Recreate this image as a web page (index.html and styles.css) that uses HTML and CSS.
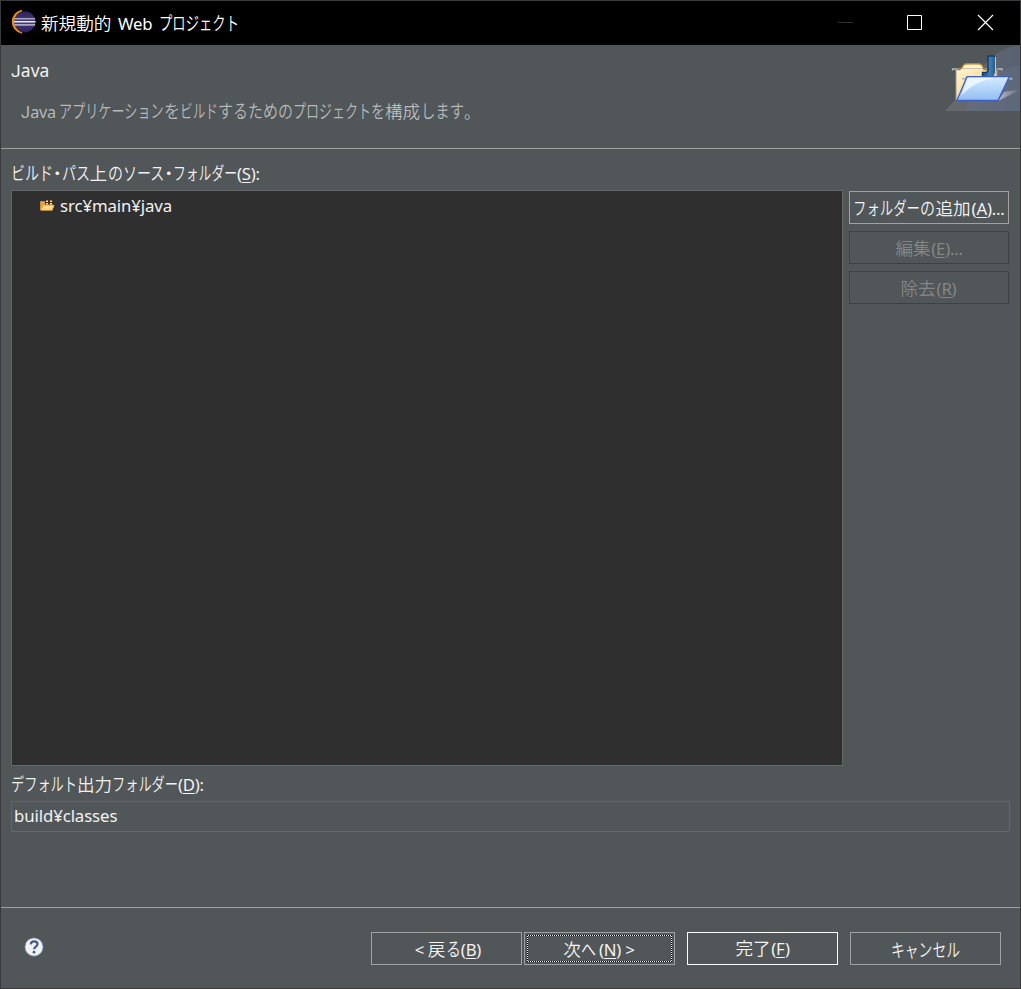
FILE: index.html
```html
<!DOCTYPE html>
<html lang="ja">
<head>
<meta charset="utf-8">
<title>新規動的 Web プロジェクト</title>
<link rel="stylesheet" href="styles.css">
</head>
<body>
<div class="window">
  <header class="titlebar">
    <svg class="app-icon" width="25" height="24" viewBox="0 0 25 24">
      <defs><linearGradient id="orb" x1="0" y1="0" x2="0" y2="1"><stop offset="0" stop-color="#2c2158"/><stop offset=".5" stop-color="#443c7b"/><stop offset="1" stop-color="#2b205c"/></linearGradient><clipPath id="orbclip"><circle cx="13.8" cy="11.8" r="10.8"/></clipPath></defs>
      <path d="M11 .5A11.4 11.4 0 0 0 11 23 12 12 0 0 1 11 .5Z" fill="#f39a22" stroke="#e78a18" stroke-width="1.4"/>
      <circle cx="13.8" cy="11.8" r="10.6" fill="url(#orb)"/>
      <g clip-path="url(#orbclip)"><path d="M2 8.8h23" stroke="#aaa6bf" stroke-width="1.4"/><path d="M2 11.8h23" stroke="#e9e8ee" stroke-width="1.6"/><path d="M2 14.9h23" stroke="#aaa6bf" stroke-width="1.6"/></g>
    </svg>
    <div class="text title"><span class="r kanji" style="--w:77">新規動的</span><span class="r" style="--w:41">Web</span><span class="k" style="--w:80;--n:6">プロジェクト</span></div>
    <svg class="caption" width="160" height="18" viewBox="0 0 160 18" fill="none">
      <path d="M1 8.5h15" stroke="#333"/><path d="M70.5 1.5h14v14h-14z" stroke="#fff"/><path d="M141 1l15 15M156 1l-15 15" stroke="#fff" stroke-width="1.2"/>
    </svg>
  </header>
  <section class="banner">
    <div class="banner-copy">
      <h1 class="text heading"><span class="r" style="--w:40"><span class="cap">J</span>ava</span></h1>
      <p class="text desc"><span class="r" style="--w:38"><span class="cap">J</span>ava</span><span class="k" style="--w:105;--n:8">アプリケーション</span><span class="k" style="--w:16;--n:1">を</span><span class="k" style="--w:38;--n:3">ビルド</span><span class="k" style="--w:75;--n:5">するための</span><span class="k" style="--w:78;--n:6">プロジェクト</span><span class="k" style="--w:14;--n:1">を</span><span class="r kanji" style="--w:36">構成</span><span class="k" style="--w:43;--n:3">します</span><span class="r" style="--w:18">。</span></p>
    </div>
    <svg class="folder-art" width="75" height="66" viewBox="0 0 75 66">
      <defs>
        <linearGradient id="haze"><stop offset="0" stop-color="#747678"/><stop offset=".5" stop-color="#6b6f7b"/><stop offset="1" stop-color="#596780"/></linearGradient>
        <linearGradient id="back" x1="0" y1="0" x2="1" y2="1"><stop offset="0" stop-color="#fff4cf"/><stop offset="1" stop-color="#efc96e"/></linearGradient>
        <linearGradient id="front" x1="0" y1="0" x2="0" y2="1"><stop offset="0" stop-color="#d3edff"/><stop offset="1" stop-color="#92bdf3"/></linearGradient>
        <linearGradient id="jay"><stop offset="0" stop-color="#1d4976"/><stop offset=".6" stop-color="#477fab"/><stop offset="1" stop-color="#235b8c"/></linearGradient>
        <linearGradient id="shade"><stop offset="0" stop-color="#bbb8c8"/><stop offset="1" stop-color="#bbb8c8" stop-opacity="0"/></linearGradient>
      </defs>
      <path d="M0 66L23 41 39 20Q54 3 75 0V66Z" fill="url(#haze)" opacity=".65"/>
      <path d="M20 66Q35 27 75 20V66Z" fill="#667187" opacity=".45"/>
      <path d="M53 56L75 45Q68 45 59 47Z" fill="url(#shade)"/>
      <path d="M7.500 25.500V24H12M57 25.500V24H52" stroke="#b8b8bb" stroke-width="1.4" fill="none"/>
      <path d="M11 23.5H52V55H11Z" fill="url(#back)" stroke="#9b91a5"/>
      <path d="M15 23.5L17 22 19 19Q20 18.5 22 18.5H34Q36 18.5 37 20L39 23.5Z" fill="#fff1c3"/>
      <path d="M12 24.500H15Q17 23 19 19.500 20 18.800 22 18.800H34Q36 18.800 37 20L39 24.500H52.500V31" fill="none" stroke="#a87d22" stroke-width="1.3"/>
      <path d="M43 10.5H50V27Q50 34 42 34H37V27H41Q43 27 43 24Z" fill="url(#jay)"/>
      <path d="M37.500 32V27.500H41Q43 27.500 43 24V11H50" stroke="#0c3d72" stroke-width="1.4" fill="none"/><path d="M50.500 12V28Q50 30 48 32" stroke="#b9c8ce" fill="none"/>
      <path d="M18 35V33.500H22M66.500 35V33.500H63" stroke="#b5b3ba" stroke-width="1.4" fill="none"/>
      <path d="M22 31.7H64.200L53 55.500H11.800Z" fill="url(#front)" stroke="#405fc5" stroke-width="1.3"/>
      <path d="M23 33H49Q28 37 16 51Z" fill="#f5fcff" opacity=".75"/>
    </svg>
  </section>
  <main class="content">
    <div class="text label"><span class="k" style="--w:42;--n:3">ビルド</span><span class="dot">・</span><span class="k" style="--w:28;--n:2">パス</span><span class="r kanji" style="--w:18">上</span><span class="k" style="--w:15;--n:1">の</span><span class="k" style="--w:42;--n:3">ソース</span><span class="dot">・</span><span class="k" style="--w:64;--n:5">フォルダー</span><span class="m">(<u>S</u>):</span></div>
    <div class="sources">
      <div class="tree">
        <div class="tree-row">
          <svg width="16" height="14" viewBox="0 0 16 14"><path d="M1.500 12V3.500h4l1 1h7v7.500z" fill="#e5a444" stroke="#d28a35"/><path d="M6 1.500h8v5H6z" fill="#4b2e1c"/><path d="M7 2.500h2v1.500H7zM11 2.500h2v1.500h-2zM7 5h2v1.500H7zM11 5h2v1.500h-2z" fill="#ffdca0"/><path d="M4.500 7.500h10.500L13 12H2z" fill="#ffdd86" stroke="#f3b458"/></svg>
          <span class="text path"><span class="m">src¥main¥java</span></span>
        </div>
      </div>
      <div class="actions">
        <button class="btn"><span class="text"><span class="k" style="--w:67;--n:5">フォルダー</span><span class="k" style="--w:15;--n:1">の</span><span class="r kanji" style="--w:36">追加</span><span class="r" style="--w:34">(<u>A</u>)...</span></span></button>
        <button class="btn disabled" disabled><span class="text"><span class="r kanji" style="--w:36">編集</span><span class="r" style="--w:32">(<u>E</u>)...</span></span></button>
        <button class="btn disabled" disabled><span class="text"><span class="r kanji" style="--w:35">除去</span><span class="r" style="--w:22">(<u>R</u>)</span></span></button>
      </div>
    </div>
    <div class="text output-label"><span class="k" style="--w:66;--n:5">デフォルト</span><span class="r kanji" style="--w:35">出力</span><span class="k" style="--w:66;--n:5">フォルダー</span><span class="m">(<u>D</u>):</span></div>
    <div class="field text"><span class="m">build¥classes</span></div>
  </main>
  <footer class="footer">
    <svg class="help" width="20" height="20" viewBox="0 0 20 20"><circle cx="10" cy="10" r="9.200" fill="#f1f1f3" stroke="#60759f" stroke-width=".8"/><path d="M6.700 7.300Q7 4.400 10.100 4.400 13.500 4.400 13.500 7.100 13.500 8.700 11.700 9.700 10.200 10.600 10.200 12.200" fill="none" stroke="#435b86" stroke-width="2.200"/><circle cx="10" cy="15.200" r="1.400" fill="#435b86"/></svg>
    <div class="nav">
      <button class="btn"><span class="text"><span class="r" style="--w:16">&lt;</span><span class="r kanji" style="--w:18">戻</span><span class="k" style="--w:15;--n:1">る</span><span class="r" style="--w:21">(<u>B</u>)</span></span></button>
      <button class="btn focused"><span class="text"><span class="r kanji" style="--w:18">次</span><span class="k" style="--w:15;--n:1">へ</span><span class="r" style="--w:28">(<u>N</u>)</span><span class="r" style="--w:12">&gt;</span></span></button>
      <button class="btn default"><span class="text"><span class="r kanji" style="--w:36">完了</span><span class="r" style="--w:19">(<u>F</u>)</span></span></button>
      <button class="btn"><span class="text"><span class="k" style="--w:69;--n:5">キャンセル</span></span></button>
    </div>
  </footer>
</div>
</body>
</html>
```
FILE: styles.css
```css
* { box-sizing: border-box; }
body { margin: 0; background: #393a3b; color: #f2f2f2; }
.window { width: 1021px; height: 989px; border: 1px solid #393a3b; background: #515658; display: flex; flex-direction: column; overflow: hidden; }
.text { display: inline-flex; align-items: baseline; margin: 0; font: 400 16.8px/24px "Noto Sans", "Noto Sans CJK JP", sans-serif; letter-spacing: -.25px; white-space: nowrap; }
.r { width: calc(var(--w) * 1px); }
.kanji { font: 350 17.6px/24px "Noto Sans CJK JP", sans-serif; letter-spacing: 0; }
.k { width: calc(var(--w) * 1px); font: 350 18.6px/24px "Noto Sans CJK JP", sans-serif; letter-spacing: 0; transform: scaleX(calc(var(--w) / var(--n) / 18.6)); transform-origin: left; }
.dot { width: 8.5px; font: 400 17px/24px "Noto Sans CJK JP", sans-serif; letter-spacing: 0; font-feature-settings: "halt"; }
.cap { font-family: Roboto, sans-serif; letter-spacing: .2px; }
u { text-decoration-thickness: 1px; text-underline-offset: 2px; }
.titlebar { height: 44px; flex: none; display: flex; align-items: center; background: #000; color: #fff; padding-left: 10px; }
.app-icon { margin-top: -3px; margin-right: 5px; }
.caption { margin-left: auto; margin-right: 23px; }
.banner { height: 104px; flex: none; display: flex; justify-content: space-between; border-bottom: 1px solid #a0a09d; }
.banner-copy { display: flex; flex-direction: column; padding: 13px 0 0 10px; }
.heading { font-size: 17.4px; letter-spacing: .1px; }
.desc { margin: 15px 0 0 10px; color: #b7b9ba; font-size: 16.2px; }
.folder-art { display: block; flex: none; }
.content { height: 758px; flex: none; padding: 11px 10px 0; display: flex; flex-direction: column; }
.label { height: 30px; }
.sources { display: flex; gap: 6px; height: 576px; }
.tree { width: 832px; border: 1px solid #646667; background: #2f2f2f; padding: 2px 0 0 27px; }
.tree-row { display: flex; align-items: center; gap: 5px; height: 24px; }
.path { letter-spacing: -.1px; padding-top: 2px; }
.actions { display: flex; flex-direction: column; gap: 7px; padding-top: 1px; }
.btn { width: 160px; height: 33px; padding: 0; display: flex; align-items: center; justify-content: center; border: 1px solid #a0a1a1; border-radius: 0; background: transparent; color: #f2f2f2; }
.btn.disabled { border-color: #3d4142; color: #858787; padding-top: 1px; }
.output-label { margin-top: 5px; height: 30px; }
.field { height: 31px; width: 999px; border: 1px solid #646768; padding: 2px 2px; letter-spacing: -.1px; }
.footer { flex: 1; border-top: 1px solid #a0a09d; display: flex; justify-content: space-between; padding: 24px 19px 0 23px; }
.help { margin-top: 5px; }
.nav { display: flex; }
.nav .btn { width: 151px; }
.nav .focused { margin: 0 12px 0 2px; position: relative; }
.focused::after { content: ""; position: absolute; inset: 2px; background: repeating-linear-gradient(90deg, #000 0 1px, #e8e8e8 1px 2px) top / 100% 1px no-repeat, repeating-linear-gradient(90deg, #000 0 1px, #e8e8e8 1px 2px) bottom / 100% 1px no-repeat, repeating-linear-gradient(#000 0 1px, #e8e8e8 1px 2px) left / 1px 100% no-repeat, repeating-linear-gradient(#000 0 1px, #e8e8e8 1px 2px) right / 1px 100% no-repeat; }
.nav .default { margin-right: 12px; border-color: #fff; }
```
